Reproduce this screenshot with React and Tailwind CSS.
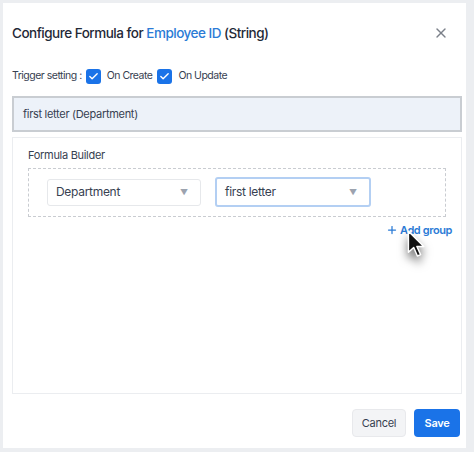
import React from 'react';
import { X, Check, Plus } from 'lucide-react';

const Checkbox = () => (
    <span className="w-[15px] h-[15px] rounded-[3px] bg-[#1a73e8] flex items-center justify-center">
        <Check size={11} strokeWidth={3} className="text-white" />
    </span>
);

const Select = ({ label, focused }) => (
    <div
        className={`flex items-center justify-between bg-white rounded-[3px] px-2 ${
            focused ? 'w-[156px] h-[30px] border-2 border-[#b3cff3]' : 'w-[154px] h-[27px] border border-[#e6e8eb]'
        }`}
    >
        <span className="text-[12px] text-[#374151] tracking-[-0.3px]">{label}</span>
        <span className="text-[8px] text-[#9ca3af] mr-1">▼</span>
    </div>
);

const Cursor = () => (
    <svg width="28" height="36" viewBox="0 0 26 34" className="absolute left-[405px] top-[229px] drop-shadow-[0_6px_5px_rgba(0,0,0,0.55)]">
        <path d="M3 2 L3 22 L8 17.5 L11.5 25.5 L14.5 24.2 L11 16.5 L17.5 16.5 Z" fill="#111" stroke="#fff" strokeWidth="1.4" strokeLinejoin="round" />
    </svg>
);

export default function App() {
    return (
        <div className="w-[474px] h-[452px] bg-[#eceef1] pt-[3px] pl-[3px] relative" style={{ fontFamily: 'Inter, "Noto Sans", sans-serif' }}>
            <div className="w-[463px] h-[445px] bg-white flex flex-col pl-[9px] pr-[4px]">
                <div className="flex items-center justify-between h-[60px]">
                    <h1 className="text-[13.5px] font-medium text-[#1f2937] tracking-[-0.5px]">
                        Configure Formula for <span className="text-[#2b7bd6]">Employee ID</span> (String)
                    </h1>
                    <X size={16} strokeWidth={2} className="text-[#7b8089] mr-[13px]" />
                </div>

                <div className="flex items-center gap-[5px] text-[10.5px] text-[#374151] h-[26px] tracking-[-0.5px]">
                    <span className="mr-[-1px]">Trigger setting :</span>
                    <Checkbox />
                    <span className="ml-[1px]">On Create</span>
                    <Checkbox />
                    <span className="ml-[1px]">On Update</span>
                </div>

                <div className="mt-[7px] h-[36px] bg-[#edf2f9] border-2 border-[#c9cdd2] flex items-center px-[9px] text-[11px] text-[#374151] tracking-[-0.3px]">
                    first letter (Department)
                </div>

                <div className="mt-[5px] h-[257px] border border-[#ebedf0] px-[15px] pt-[9px]">
                    <div className="text-[11px] text-[#374151] tracking-[-0.3px]">Formula Builder</div>
                    <div className="mt-[4px] h-[49px] border border-dashed border-[#c9ccd1] flex items-center gap-[14px] pl-[18px]">
                        <Select label="Department" />
                        <Select label="first letter" focused />
                    </div>
                    <div className="flex justify-end mt-[5px] mr-[-6px]">
                        <span className="flex items-center gap-[2px] text-[11px] font-semibold text-[#2b7bd6] tracking-[-0.4px]">
                            <Plus size={12} strokeWidth={2.5} />
                            Add group
                        </span>
                    </div>
                </div>

                <div className="flex justify-end gap-[8px] mt-[15px] pr-[2px]">
                    <button className="h-[28px] w-[54px] rounded-[4px] bg-[#f3f4f6] border border-[#e8e9ec] text-[11px] text-[#374151] tracking-[-0.3px]">Cancel</button>
                    <button className="h-[28px] w-[46px] rounded-[4px] bg-[#1a73e8] text-[11px] font-semibold text-white tracking-[-0.3px]">Save</button>
                </div>
            </div>
            <Cursor />
        </div>
    );
}
